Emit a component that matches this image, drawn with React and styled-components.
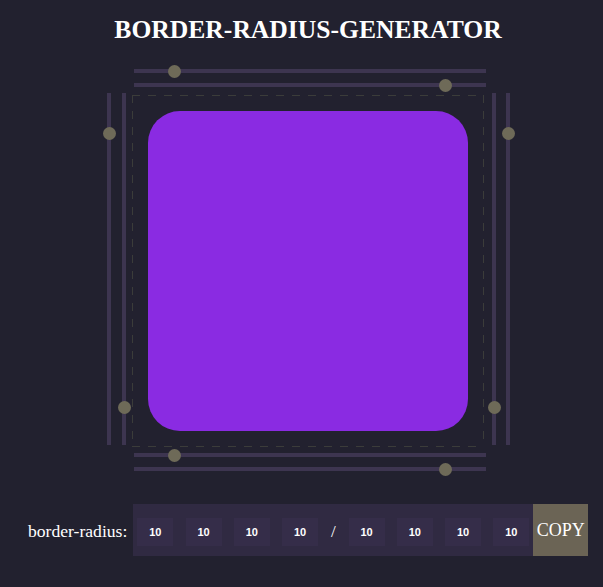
import React, { useState } from "react";
import styled, { createGlobalStyle } from "styled-components";

const GlobalStyle = createGlobalStyle`
    html, body {
        margin: 0;
        padding: 0;
        background: #22212f;
        font-family: "Liberation Serif", "Times New Roman", serif;
        color: #fff;
    }
`;

const App = () => {
    const [top1] = useState(10);
    const [top2] = useState(90);
    const [left1] = useState(10);
    const [left2] = useState(91);
    const [right1] = useState(91);
    const [right2] = useState(10);
    const [bottom1] = useState(10);
    const [bottom2] = useState(90);
    const values = ["10", "10", "10", "10", "10", "10", "10", "10"];

    return (
        <>
            <GlobalStyle />
            <Titulo>BORDER-RADIUS-GENERATOR</Titulo>
            <Stage>
                <div />
                <HGroup>
                    <HSlider value={top1} />
                    <HSlider value={top2} />
                </HGroup>
                <div />

                <VGroup $pad={3} $gap={11}>
                    <VSlider value={left1} />
                    <VSlider value={left2} />
                </VGroup>
                <DashedBox>
                    <Preview />
                </DashedBox>
                <VGroup $pad={6} $gap={10}>
                    <VSlider value={right1} />
                    <VSlider value={right2} />
                </VGroup>

                <div />
                <HGroup>
                    <HSlider value={bottom1} />
                    <HSlider value={bottom2} />
                </HGroup>
                <div />
            </Stage>
            <Resultado>
                <Label>border-radius:</Label>
                <Panel>
                    {values.slice(0, 4).map((v, i) => <Campo key={i}>{v}</Campo>)}
                    <Slash>/</Slash>
                    {values.slice(4).map((v, i) => <Campo key={i + 4}>{v}</Campo>)}
                </Panel>
                <BotonCopiar>COPY</BotonCopiar>
            </Resultado>
        </>
    );
};

const HSlider = ({ value }) => (
    <HTrackWrap>
        <HTrack />
        <Thumb style={{ left: `calc((100% - 13px) * ${value / 100})`, top: 0.5 }} />
    </HTrackWrap>
);

const VSlider = ({ value }) => (
    <VTrackWrap>
        <Thumb style={{ top: `calc((100% - 13px) * ${value / 100})`, left: -4.5 }} />
    </VTrackWrap>
);

export default App;

const Titulo = styled.h1`
    margin: 0;
    padding: 16px 0 0 13px;
    font-size: 25.6px;
    line-height: 28px;
    font-weight: bold;
    text-align: center;
`;

const Stage = styled.div`
    display: grid;
    grid-template-columns: 28px 354px 28px;
    grid-template-rows: 28px 356px 28px;
    margin: 20px 0 0 104px;
    width: 410px;
`;

const HGroup = styled.div`
    display: flex;
    flex-direction: column;
    margin-left: 2px;
    width: 352px;
`;

const HTrackWrap = styled.div`
    position: relative;
    height: 14px;
    display: flex;
    align-items: center;
`;

const HTrack = styled.div`
    width: 100%;
    height: 4px;
    background: #3d3550;
`;

const Thumb = styled.div`
    position: absolute;
    width: 13px;
    height: 13px;
    border-radius: 50%;
    background: #6e6a58;
`;

const VGroup = styled.div`
    display: flex;
    padding-left: ${p => p.$pad}px;
    gap: ${p => p.$gap}px;
    padding-top: 1px;
`;

const VTrackWrap = styled.div`
    position: relative;
    width: 4px;
    height: 352px;
    background: #3d3550;
`;

const DashedBox = styled.div`
    margin-top: 3px;
    width: 352px;
    height: 352px;
    box-sizing: border-box;
    padding: 16px;
    background:
        repeating-linear-gradient(90deg, #3b3c3a 0 8px, transparent 8px 16px) top left / 100% 1px no-repeat,
        repeating-linear-gradient(90deg, #3b3c3a 0 8px, transparent 8px 16px) bottom left / 100% 1px no-repeat,
        repeating-linear-gradient(180deg, #3b3c3a 0 8px, transparent 8px 16px) top left / 1px 100% no-repeat,
        repeating-linear-gradient(180deg, #3b3c3a 0 8px, transparent 8px 16px) top right / 1px 100% no-repeat;
`;

const Preview = styled.div`
    width: 320px;
    height: 320px;
    background: #8a2be2;
    border-radius: 32px;
`;

const Resultado = styled.div`
    display: flex;
    align-items: center;
    margin-top: 28px;
    padding-left: 28px;
`;

const Label = styled.span`
    font-size: 17.6px;
    margin-right: 6px;
    margin-top: 2px;
`;

const Panel = styled.div`
    display: flex;
    align-items: center;
    gap: 12.3px;
    box-sizing: border-box;
    width: 400px;
    height: 52px;
    padding: 4px 4px 0;
    background: #302a42;
`;

const Campo = styled.div`
    width: 36px;
    height: 28px;
    display: flex;
    align-items: center;
    justify-content: center;
    background: #352d49;
    font-family: "Liberation Sans", Arial, sans-serif;
    font-weight: bold;
    font-size: 11px;
    color: #fff;
`;

const Slash = styled.span`
    width: 6px;
    text-align: center;
    font-size: 17px;
`;

const BotonCopiar = styled.button`
    width: 55px;
    height: 52px;
    padding: 0;
    border: none;
    background: #6b6455;
    color: #fff;
    font-family: "Liberation Serif", "Times New Roman", serif;
    font-size: 18px;
    cursor: pointer;
`;
